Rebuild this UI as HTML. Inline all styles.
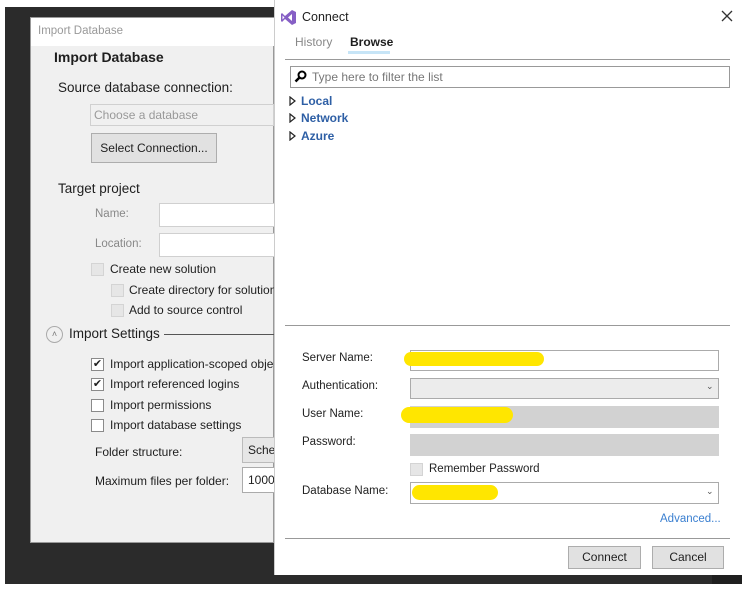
<!DOCTYPE html>
<html><head><meta charset="utf-8"><style>
*{margin:0;padding:0;box-sizing:border-box}
body{width:742px;height:590px;position:relative;background:#fff;font-family:"Liberation Sans",sans-serif;font-size:12px;color:#1e1e1e;overflow:hidden}
.a{position:absolute}
.cb{position:absolute;width:13px;height:13px;border:1px solid #8a8a8a;background:#fff}
.cbd{position:absolute;width:13px;height:13px;border:1px solid #d4d4d4;background:#e6e6e6}
.in{position:absolute;background:#fff;border:1px solid #ababab}
.lbl{position:absolute;font-size:11.5px;color:#222}
.hl{position:absolute;background:#ffe600;border-radius:8px}
.btn{position:absolute;background:#e1e1e1;border:1px solid #adadad;text-align:center;font-size:12px;line-height:20px}
</style></head><body>
<div class="a" style="left:5px;top:7px;width:270px;height:577px;background:#2b2b2b"></div>
<div class="a" style="left:274px;top:574px;width:468px;height:10px;background:#2b2b2b"></div>
<div class="a" style="left:712px;top:574px;width:30px;height:10px;background:#1f1f1f"></div>
<!-- Import dialog -->
<div class="a" style="left:30px;top:17px;width:244px;height:526px;background:#f0f0f0;border:1px solid #999"></div>
<div class="a" style="left:31px;top:18px;width:243px;height:28px;background:#fff"></div>
<div class="a" style="left:38px;top:25px;font-size:11.5px;color:#999">Import Database</div>
<div class="a" style="left:54px;top:49px;font-size:14px;font-weight:bold">Import Database</div>
<div class="a" style="left:58px;top:80px;font-size:13.5px">Source database connection:</div>
<div class="a" style="left:90px;top:104px;width:184px;height:22px;border:1px solid #d0d0d0;background:#f0f0f0;color:#999;padding:3px 3px;font-size:12px">Choose a database</div>
<div class="btn" style="left:91px;top:133px;width:126px;height:30px;line-height:28px;background:#e1e1e1">Select Connection...</div>
<div class="a" style="left:58px;top:181px;font-size:13.5px">Target project</div>
<div class="a" style="left:95px;top:208px;color:#888;font-size:11.5px">Name:</div>
<div class="in" style="left:159px;top:203px;width:120px;height:24px;border-color:#d0d0d0"></div>
<div class="a" style="left:95px;top:238px;color:#888;font-size:11.5px">Location:</div>
<div class="in" style="left:159px;top:233px;width:120px;height:24px;border-color:#d0d0d0"></div>
<div class="cbd" style="left:91px;top:263px"></div><div class="a" style="left:110px;top:262px">Create new solution</div>
<div class="cbd" style="left:111px;top:284px"></div><div class="a" style="left:129px;top:283px">Create directory for solution</div>
<div class="cbd" style="left:111px;top:304px"></div><div class="a" style="left:129px;top:303px">Add to source control</div>
<div class="a" style="left:46px;top:326px;width:17px;height:17px;border:1px solid #aaa;border-radius:50%;font-size:9px;text-align:center;line-height:14px;color:#777">˄</div>
<div class="a" style="left:69px;top:326px;font-size:13.5px">Import Settings</div>
<div class="a" style="left:164px;top:334px;width:110px;height:1px;background:#555"></div>
<div class="cb" style="left:91px;top:358px;font-size:11px;line-height:11px;text-align:center">✔</div><div class="a" style="left:110px;top:357px">Import application-scoped obje</div>
<div class="cb" style="left:91px;top:378px;font-size:11px;line-height:11px;text-align:center">✔</div><div class="a" style="left:110px;top:377px">Import referenced logins</div>
<div class="cb" style="left:91px;top:399px"></div><div class="a" style="left:110px;top:398px">Import permissions</div>
<div class="cb" style="left:91px;top:419px"></div><div class="a" style="left:110px;top:418px">Import database settings</div>
<div class="a" style="left:95px;top:445px">Folder structure:</div>
<div class="a" style="left:242px;top:437px;width:40px;height:26px;background:#e6e6e6;border:1px solid #bbb;padding:5px 5px">Sche</div>
<div class="a" style="left:95px;top:474px">Maximum files per folder:</div>
<div class="in" style="left:242px;top:467px;width:40px;height:26px;padding:5px 5px">1000</div>
<!-- Connect dialog -->
<div class="a" style="left:274px;top:0;width:468px;height:575px;background:#fff;border-left:1px solid #ccc"></div>
<svg class="a" style="left:280px;top:9px" width="17" height="17" viewBox="0 0 17 17"><path d="M12 1 L16 3 V14 L12 16 L5 10 L2 13 L1 12 V5 L2 4 L5 7 Z M12 5 L8 8.5 L12 12 Z M2.5 6.5 V10.5 L4.5 8.5 Z" fill="#865fc5" fill-rule="evenodd"/></svg>
<div class="a" style="left:302px;top:10px;font-size:12.5px">Connect</div>
<svg class="a" style="left:721px;top:10px" width="12" height="12" viewBox="0 0 12 12"><path d="M1 1 L11 11 M11 1 L1 11" stroke="#333" stroke-width="1.3"/></svg>
<div class="a" style="left:295px;top:35px;color:#888">History</div>
<div class="a" style="left:350px;top:35px;font-weight:bold">Browse</div>
<div class="a" style="left:348px;top:51px;width:42px;height:3px;background:#c7e5f7"></div>
<div class="a" style="left:285px;top:59px;width:445px;height:1px;background:#999"></div>
<div class="in" style="left:290px;top:66px;width:440px;height:22px;border-color:#999"></div>
<svg class="a" style="left:294px;top:70px" width="13" height="13" viewBox="0 0 13 13"><circle cx="8" cy="5" r="3.5" fill="none" stroke="#000" stroke-width="2"/><path d="M5.5 7.5 L1.5 11.5" stroke="#000" stroke-width="2.5"/></svg>
<div class="a" style="left:312px;top:70px;color:#777">Type here to filter the list</div>
<svg class="a" style="left:289px;top:96px" width="7" height="10"><path d="M1 1 L6 5 L1 9 Z" fill="none" stroke="#222" stroke-width="1.2"/></svg><div class="a" style="left:301px;top:94px;font-weight:bold;color:#2e5fa5">Local</div>
<svg class="a" style="left:289px;top:113px" width="7" height="10"><path d="M1 1 L6 5 L1 9 Z" fill="none" stroke="#222" stroke-width="1.2"/></svg><div class="a" style="left:301px;top:111px;font-weight:bold;color:#2e5fa5">Network</div>
<svg class="a" style="left:289px;top:131px" width="7" height="10"><path d="M1 1 L6 5 L1 9 Z" fill="none" stroke="#222" stroke-width="1.2"/></svg><div class="a" style="left:301px;top:129px;font-weight:bold;color:#2e5fa5">Azure</div>
<div class="a" style="left:285px;top:325px;width:445px;height:1px;background:#999"></div>
<div class="lbl" style="left:302px;top:352px">Server Name:</div>
<div class="in" style="left:410px;top:350px;width:309px;height:21px"></div>
<div class="hl" style="left:404px;top:352px;width:140px;height:14px"></div>
<div class="lbl" style="left:302px;top:380px">Authentication:</div>
<div class="in" style="left:410px;top:378px;width:309px;height:21px;background:#ececec"></div>
<div class="a" style="left:706px;top:381px;font-size:9px;color:#555">⌄</div>
<div class="lbl" style="left:302px;top:408px">User Name:</div>
<div class="a" style="left:410px;top:406px;width:309px;height:22px;background:#d2d2d2"></div>
<div class="hl" style="left:401px;top:407px;width:112px;height:16px"></div>
<div class="lbl" style="left:302px;top:436px">Password:</div>
<div class="a" style="left:410px;top:434px;width:309px;height:22px;background:#d2d2d2"></div>
<div class="cbd" style="left:410px;top:463px"></div>
<div class="lbl" style="left:429px;top:463px">Remember Password</div>
<div class="lbl" style="left:302px;top:485px">Database Name:</div>
<div class="in" style="left:410px;top:482px;width:309px;height:22px"></div>
<div class="a" style="left:706px;top:486px;font-size:9px;color:#555">⌄</div>
<div class="hl" style="left:412px;top:485px;width:86px;height:15px"></div>
<div class="a" style="left:660px;top:513px;font-size:11.5px;color:#3a7fd0">Advanced...</div>
<div class="a" style="left:285px;top:538px;width:445px;height:1px;background:#999"></div>
<div class="btn" style="left:568px;top:546px;width:73px;height:23px">Connect</div>
<div class="btn" style="left:652px;top:546px;width:72px;height:23px">Cancel</div>
</body></html>
